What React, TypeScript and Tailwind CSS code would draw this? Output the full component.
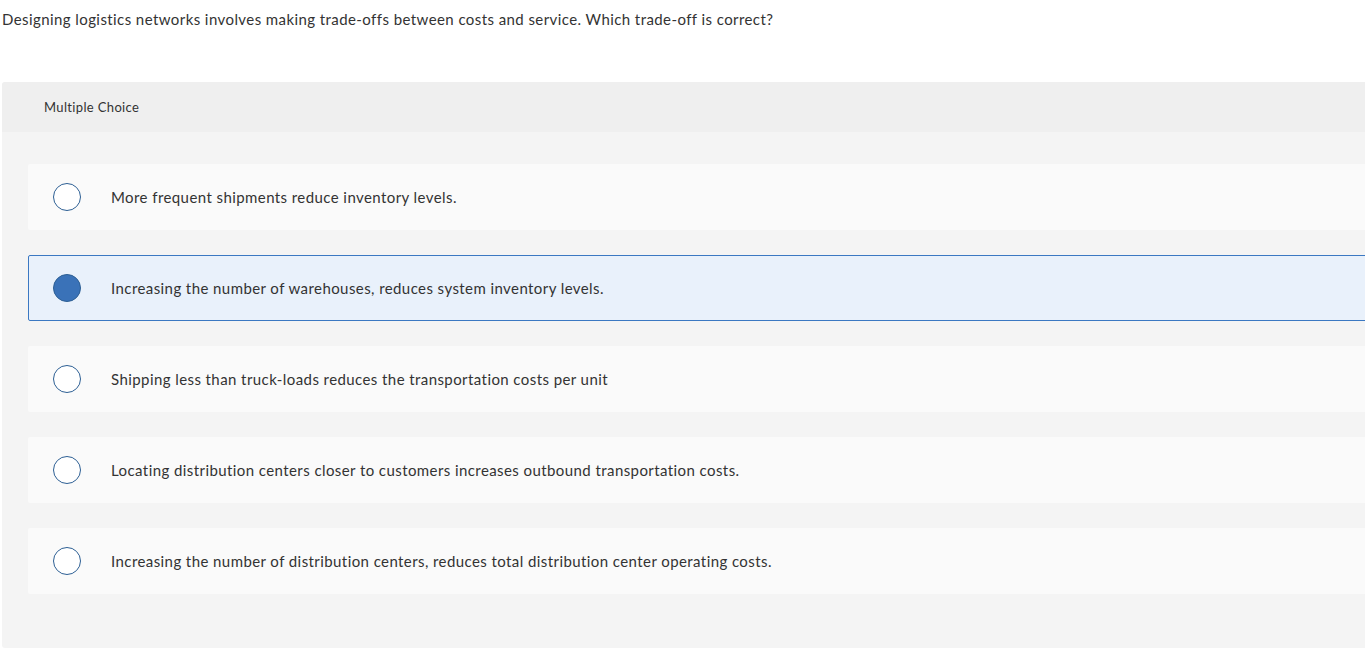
import React, { useState } from 'react';

const options = [
  'More frequent shipments reduce inventory levels.',
  'Increasing the number of warehouses, reduces system inventory levels.',
  'Shipping less than truck-loads reduces the transportation costs per unit',
  'Locating distribution centers closer to customers increases outbound transportation costs.',
  'Increasing the number of distribution centers, reduces total distribution center operating costs.',
];

const App = () => {
  const [selected, setSelected] = useState(1);

  return (
    <div className="min-h-screen bg-white overflow-hidden text-[#333] font-['Lato',sans-serif]">
      <p className="pl-[2px] pt-[8px] text-[15px] leading-[22px] tracking-[0.42px]">
        Designing logistics networks involves making trade-offs between costs and service. Which trade-off is correct?
      </p>

      <div className="ml-[2px] mr-[-20px] mt-[52px] rounded-l-[3px] bg-[#f4f4f4]">
        <div className="h-[50px] flex items-center pl-[42px] pt-[2px] bg-[#efefef] rounded-tl-[3px] text-[13px] tracking-[0.35px]">
          Multiple Choice
        </div>

        <div className="flex flex-col gap-[25px] pl-[26px] pt-[32px] pb-[54px]">
          {options.map((text, i) => {
            const isSel = i === selected;
            return (
              <button
                key={i}
                type="button"
                onClick={() => setSelected(i)}
                className={
                  isSel
                    ? 'h-[66px] flex items-center text-left rounded-[2px] border border-[#3b78c2] bg-[#e9f1fb]'
                    : 'h-[66px] flex items-center text-left rounded-[2px] border border-transparent bg-[#fafafa]'
                }
              >
                <span
                  className={
                    isSel
                      ? 'ml-[24px] w-[28px] h-[28px] rounded-full border-[1.5px] border-[#2d5f94] bg-[#3a72b8] shrink-0'
                      : 'ml-[24px] w-[28px] h-[28px] rounded-full border-[1.5px] border-[#2d5f94] bg-white shrink-0'
                  }
                />
                <span className="ml-[30px] text-[15px] tracking-[0.42px]">{text}</span>
              </button>
            );
          })}
        </div>
      </div>
    </div>
  );
};

export default App;
